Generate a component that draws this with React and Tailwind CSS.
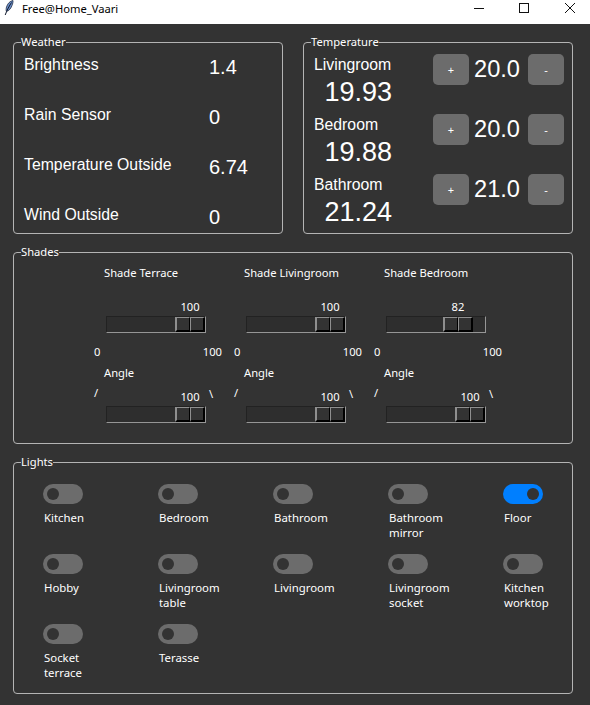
const SANS = "font-['Liberation_Sans',Arial,sans-serif]";
const UI = "font-['Noto_Sans','Open_Sans',sans-serif]";

function Panel({ title, className = "", children }) {
  return (
    <fieldset className={`border border-[#b4b4b4] rounded-[4px] min-w-0 ${className}`}>
      <legend className={`ml-[7px] p-0 pb-[2px] text-[11.2px] leading-[13px] text-white ${UI}`}>{title}</legend>
      {children}
    </fieldset>
  );
}

function TitleBar() {
  return (
    <div className="h-6 bg-white flex items-start">
      <svg width="10" height="16" viewBox="0 0 10 16" className="ml-[4px]">
        <path d="M9 0.5C6 1 3.5 3.5 2.5 7C2 9 2 10.5 2.4 11.5C4.8 11 7 8.5 8 5.5C8.8 3.5 9.2 1.8 9 0.5Z" fill="#6b8fca" stroke="#10182c" strokeWidth="0.7" />
        <path d="M7.5 2.5C5.5 5.5 3 10 1.2 15" fill="none" stroke="#10182c" strokeWidth="1" />
      </svg>
      <span className={`ml-[8px] mt-px text-[11.2px] leading-[15px] text-black ${UI}`}>Free@Home_Vaari</span>
      <div className="ml-auto mt-[2px] flex items-start">
        <svg width="12" height="12" viewBox="0 0 12 12" className="mr-[33px]">
          <path d="M0 6.5H10" stroke="#111" strokeWidth="1" />
        </svg>
        <svg width="12" height="12" viewBox="0 0 12 12" className="mr-[33px]">
          <rect x="0.5" y="1.5" width="9" height="9" fill="none" stroke="#111" strokeWidth="1" />
        </svg>
        <svg width="12" height="12" viewBox="0 0 12 12" className="mr-[14px]">
          <path d="M1 1L11 11M11 1L1 11" stroke="#111" strokeWidth="1" />
        </svg>
      </div>
    </div>
  );
}

const weather = [
  ["Brightness", "1.4"],
  ["Rain Sensor", "0"],
  ["Temperature Outside", "6.74"],
  ["Wind Outside", "0"],
];

const temps = [
  ["Livingroom", "19.93", "20.0"],
  ["Bedroom", "19.88", "20.0"],
  ["Bathroom", "21.24", "21.0"],
];

function TempButton({ children }) {
  return (
    <button className={`w-9 h-[31px] rounded-[5px] bg-[#6c6c6c] text-white text-[11px] leading-none flex items-center justify-center ${UI}`}>
      {children}
    </button>
  );
}

function Slider({ value }) {
  return (
    <div className="w-[100px] h-[17px] flex bg-[#2e2e2e] border-t border-l border-t-[#222] border-l-[#222] border-b border-r border-b-[#969696] border-r-[#969696]">
      <div className="shrink-0 h-full" style={{ width: `${Math.round(value * 0.68)}px` }} />
      <div className="w-[30px] h-[15px] flex shrink-0 bg-[#333]">
        <div className="flex-1 border-t border-t-[#8f8f8f] border-l-2 border-l-[#8f8f8f] border-b-2 border-b-black border-r border-r-black" />
        <div className="flex-1 border-t border-t-[#8f8f8f] border-l border-l-[#8f8f8f] border-b-2 border-b-black border-r-2 border-r-black" />
      </div>
    </div>
  );
}

function ShadeCol({ name, value }) {
  return (
    <div className={`w-[140px] text-[11.2px] leading-[15px] text-white ${UI}`}>
      <div className="ml-[10px] whitespace-nowrap">{name}</div>
      <div className="mt-[19px] ml-[12px] w-[100px] flex">
        <div className="shrink-0" style={{ width: `${Math.round(value * 0.68) + 1}px` }} />
        <div className="w-[30px] text-center shrink-0">{value}</div>
      </div>
      <div className="mt-[2px] ml-[12px]">
        <Slider value={value} />
      </div>
      <div className="mt-[11px] w-[128px] flex justify-between">
        <span>0</span>
        <span>100</span>
      </div>
      <div className="mt-[6px] ml-[10px]">Angle</div>
      <div className="mt-[5px] h-[21px] flex">
        <span className="w-[81px] shrink-0">/</span>
        <span className="w-[30px] mt-[4px] shrink-0 text-center">100</span>
        <span className="ml-[4px] mt-px">\</span>
      </div>
      <div className="ml-[12px]">
        <Slider value={100} />
      </div>
    </div>
  );
}

const lights = [
  ["Kitchen", false],
  ["Bedroom", false],
  ["Bathroom", false],
  ["Bathroom mirror", false],
  ["Floor", true],
  ["Hobby", false],
  ["Livingroom table", false],
  ["Livingroom", false],
  ["Livingroom socket", false],
  ["Kitchen worktop", false],
  ["Socket terrace", false],
  ["Terasse", false],
];

function Light({ name, on }) {
  return (
    <div>
      <div className={`w-10 h-5 rounded-full flex items-center px-1 ${on ? "bg-[#007fff] justify-end" : "bg-[#6c6c6c] justify-start"}`}>
        <div className="w-3 h-3 rounded-full bg-[#333]" />
      </div>
      <div className={`mt-[6px] ml-px w-[75px] text-[11.4px] leading-[15px] text-white ${UI}`}>{name}</div>
    </div>
  );
}

export default function App() {
  return (
    <div className="w-[590px] h-[705px] bg-[#333] overflow-hidden">
      <TitleBar />
      <div className="pt-[11px] pl-[13px] pr-[17px] flex flex-col gap-[11px]">
        <div className="flex gap-5">
          <Panel title="Weather" className="w-[270px] h-[199px]">
            <div className={`pt-[5px] pl-[10px] text-white ${SANS}`}>
              {weather.map(([label, val]) => (
                <div key={label} className="h-[50px] flex">
                  <div className="w-[185px] pt-px text-[15.8px] leading-[18px] whitespace-nowrap">{label}</div>
                  <div className="text-[20px] leading-6">{val}</div>
                </div>
              ))}
            </div>
          </Panel>
          <Panel title="Temperature" className="w-[270px] h-[199px]">
            <div className={`pt-1 pl-[10px] text-white ${SANS}`}>
              {temps.map(([label, val, set]) => (
                <div key={label} className="h-[60px] flex">
                  <div className="w-[78px] pt-[2px]">
                    <div className="text-[15.8px] leading-[18px] whitespace-nowrap">{label}</div>
                    <div className="mt-[2px] text-[27px] leading-8 text-right">{val}</div>
                  </div>
                  <div className="ml-[41px] flex h-[31px] items-center">
                    <TempButton>+</TempButton>
                    <div className="w-[59px] pr-[3px] pb-[2px] text-[23.6px] leading-7 text-center">{set}</div>
                    <TempButton>-</TempButton>
                  </div>
                </div>
              ))}
            </div>
          </Panel>
        </div>
        <Panel title="Shades" className="h-[199px]">
          <div className="pl-[80px] pt-[5px] flex">
            <ShadeCol name="Shade Terrace" value={100} />
            <ShadeCol name="Shade Livingroom" value={100} />
            <ShadeCol name="Shade Bedroom" value={82} />
          </div>
        </Panel>
        <Panel title="Lights" className="h-[239px]">
          <div className="pl-[29px] pt-[14px] grid grid-cols-[repeat(5,115px)] auto-rows-[70px]">
            {lights.map(([name, on], i) => (
              <Light key={i} name={name} on={on} />
            ))}
          </div>
        </Panel>
      </div>
    </div>
  );
}
